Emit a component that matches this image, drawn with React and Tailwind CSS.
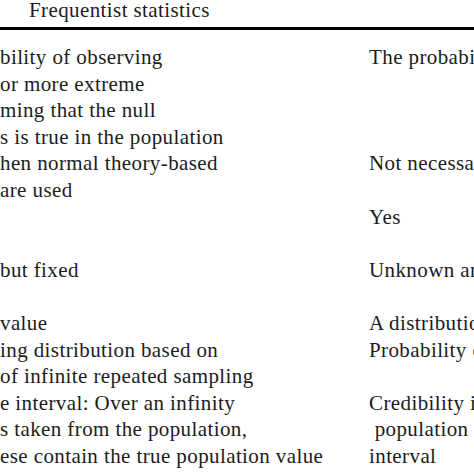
import React from "react";

const rows = [
  { left: ["bility of observing", "or more extreme", "ming that the null", "s is true in the population"], right: ["The probability of the"] },
  { left: ["hen normal theory-based", "are used"], right: ["Not necessarily"] },
  { left: ["", ""], right: ["Yes"] },
  { left: ["but fixed", ""], right: ["Unknown and random"] },
  { left: ["value", "ing distribution based on", "of infinite repeated sampling"], right: ["A distribution", "Probability of"] },
  { left: ["e interval: Over an infinity", "s taken from the population,", "ese contain the true population value"], right: ["Credibility interval", "\u00a0population", "interval"] },
];

export default function App() {
  return (
    <div
      className="w-[474px] h-[474px] overflow-hidden bg-white text-[#1c1c1c] text-[21px] tracking-[0.4px]"
      style={{ fontFamily: '"Liberation Serif", serif' }}
    >
      {/* Header */}
      <div className="h-[27px] pt-[2px] pl-[29px] leading-[16px] whitespace-nowrap">
        Frequentist statistics
      </div>
      <div className="border-t-[3px] border-black" />

      {/* Body */}
      <div className="pt-[14px] leading-[26.6px]">
        {rows.map((row, i) => (
          <div key={i} className="grid grid-cols-[369px_1fr]">
            <div className="whitespace-nowrap overflow-hidden">
              {row.left.map((line, j) => (
                <div key={j} className="h-[26.6px]">
                  {line}
                </div>
              ))}
            </div>
            <div className="whitespace-nowrap overflow-hidden">
              {row.right.map((line, j) => (
                <div key={j} className="h-[26.6px]">
                  {line}
                </div>
              ))}
            </div>
          </div>
        ))}
      </div>
    </div>
  );
}
